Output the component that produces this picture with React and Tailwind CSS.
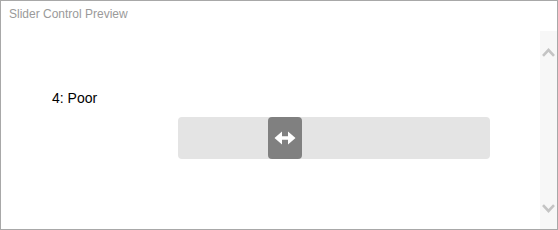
import React from 'react';

const Chevron = ({ up }) => (
  <svg width="13" height="9" viewBox="0 0 13 9" className="block">
    <path
      d={up ? 'M1 7.8 L6.5 2 L12 7.8' : 'M1 1.2 L6.5 7 L12 1.2'}
      fill="none"
      stroke="#c4c4c4"
      strokeWidth="2.6"
    />
  </svg>
);

const Arrows = () => (
  <svg width="22" height="14" viewBox="0 0 22 14" className="block">
    <path d="M0.5 7 L8 0.6 L8 5.3 L14 5.3 L14 0.6 L21.5 7 L14 13.4 L14 8.7 L8 8.7 L8 13.4 Z" fill="#ffffff" />
  </svg>
);

export default function App() {
  const value = 90;

  return (
    <div
      className="relative w-[558px] h-[230px] bg-white border border-[#a8a8a8] overflow-hidden"
      style={{ fontFamily: '"Liberation Sans", Arial, sans-serif' }}
    >
      <span className="absolute left-[-1px] top-[9px] w-px h-[4px] bg-[#555]" />
      <span className="absolute left-[-1px] top-[24px] w-px h-[3px] bg-[#1aa39a]" />
      <span className="absolute left-[-1px] top-[130px] w-px h-[4px] bg-[#1aa39a]" />
      <span className="absolute right-[-1px] top-[24px] w-px h-[3px] bg-[#1aa39a]" />
      <span className="absolute right-[-1px] top-[130px] w-px h-[4px] bg-[#1aa39a]" />

      <div className="h-[30px] pl-[8px] pt-[6px] text-[12px] leading-[15px] text-[#9a9a9a]">
        Slider Control Preview
      </div>

      <div className="flex h-[198px]">
        <div className="flex-1 pt-[59px] pl-[51px]">
          <div className="text-[14px] leading-[16px] text-black">4: Poor</div>
          <div className="mt-[11px] ml-[126px] w-[312px] h-[42px] rounded-[4px] bg-[#e4e4e4] flex">
            <div className="shrink-0" style={{ width: value }} />
            <div className="w-[34px] h-[42px] rounded-[4px] bg-[#808080] flex items-center justify-center">
              <Arrows />
            </div>
          </div>
        </div>
        <div className="w-[17px] bg-[#f7f7f7] flex flex-col items-center justify-between pt-[17px] pb-[16px]">
          <Chevron up />
          <Chevron />
        </div>
      </div>
    </div>
  );
}
